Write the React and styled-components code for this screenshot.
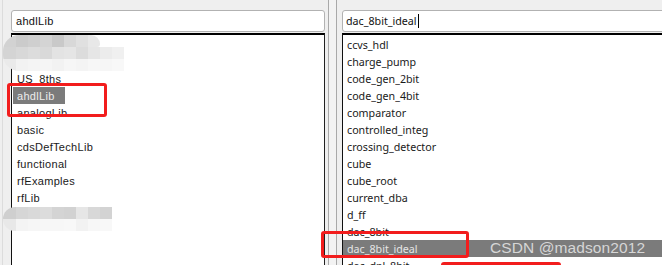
import React from 'react'
import styled, { createGlobalStyle } from 'styled-components'

const GlobalStyle = createGlobalStyle`
  html, body {
    margin: 0;
    padding: 0;
    background: #efefef;
    overflow: hidden;
  }
`

const leftItems = [
  { name: '' },
  { name: '' },
  { name: 'US_8ths' },
  { name: 'ahdlLib', selected: true },
  { name: 'analogLib' },
  { name: 'basic' },
  { name: 'cdsDefTechLib' },
  { name: 'functional' },
  { name: 'rfExamples' },
  { name: 'rfLib' },
]

const rightItems = [
  'ccvs_hdl',
  'charge_pump',
  'code_gen_2bit',
  'code_gen_4bit',
  'comparator',
  'controlled_integ',
  'crossing_detector',
  'cube',
  'cube_root',
  'current_dba',
  'd_ff',
  'dac_8bit',
  'dac_8bit_ideal',
  'dac_dpl_8bit',
]

// pixelated smudge hiding names in the reference
const mosaicTop = [
  { round: true, cells: ['#d2d2d2', '#cbcbcb', '#cfcfcf', '#d4d4d4', '#c9c9c9', '#d8d8d8', '#e0e0e0', '#e8e8e8'] },
  { cells: ['#d4d4d4', '#d8d8d8', '#dcdcdc', '#d9d9d9', '#e3e3e3', '#e5e5e5', '#dcdcdc', '#e6e6e6', '#ececec', '#f0f0f0'] },
  { cells: ['#eaeaea', '#f2f2f2', '#f4f4f4', '#f5f5f5', '#f2f2f2', '#f6f6f6', '#f4f4f4', '#f7f7f7', '#f6f6f6', '#f8f8f8'] },
]

const mosaicBottom = [
  { cells: ['#cfcfcf', '#d6d6d6', '#d9d9d9', '#dcdcdc', '#d4d4d4', '#d2d2d2', '#e6e6e6', '#d8d8d8', '#d3d3d3'] },
  { cells: ['#e8e8e8', '#f4f4f4', '#f6f6f6', '#f7f7f7', '#f7f7f7', '#f8f8f8', '#f2f2f2', '#f7f7f7', '#f8f8f8'] },
]

const Mosaic = ({ rows, top, left }) => (
  <Smudge style={{ top, left }}>
    {rows.map((row, i) => (
      <SmudgeRow key={i} $round={row.round}>
        {row.cells.map((c, j) => (
          <Cell key={j} $color={c} $cap={j === 0} />
        ))}
      </SmudgeRow>
    ))}
  </Smudge>
)

const App = () => {
  return (
    <>
      <GlobalStyle />
      <Window>
        <LeftPane>
          <SearchBox>ahdlLib</SearchBox>
          <ListBox>
            {leftItems.map((it, i) => (
              <Row key={i}>
                <Label $selected={it.selected}>{it.name}</Label>
              </Row>
            ))}
          </ListBox>
        </LeftPane>
        <Splitter>
          <Grip />
        </Splitter>
        <RightPane>
          <SearchBox $wide>
            dac_8bit_ideal
            <Caret />
          </SearchBox>
          <ListBox $open>
            {rightItems.map((name) => (
              <WideRow key={name} $selected={name === 'dac_8bit_ideal'}>
                {name}
              </WideRow>
            ))}
          </ListBox>
        </RightPane>

        <Mosaic rows={mosaicTop} top={35} left={3} />
        <Mosaic rows={mosaicBottom} top={207} left={3} />

        <Mark style={{ left: 7, top: 83, width: 100, height: 34 }} />
        <Mark style={{ left: 321, top: 231, width: 148, height: 27 }} />
        <Mark style={{ left: 441, top: 262, width: 120, height: 20 }} />

        <Watermark>CSDN @madson2012</Watermark>
      </Window>
    </>
  )
}

export default App

const Window = styled.div`
  position: relative;
  display: flex;
  width: 662px;
  height: 265px;
  overflow: hidden;
  background: #efefef;
`

const LeftPane = styled.div`
  display: flex;
  flex-direction: column;
  width: 314px;
  padding: 10px 0 0 8px;
  margin-left: 2px;
  border-left: 1px solid #dcdcdc;
  flex-shrink: 0;
`

const RightPane = styled.div`
  display: flex;
  flex-direction: column;
  flex: 1;
  min-width: 0;
  padding-top: 10px;
`

const Splitter = styled.div`
  width: 17px;
  flex-shrink: 0;
  display: flex;
  padding-left: 3px;
  box-sizing: border-box;
`

const Grip = styled.div`
  width: 7px;
  height: 100%;
  border-left: 1px solid #a9a9a9;
  border-right: 1px solid #a9a9a9;
  background: #f3f3f3;
`

const SearchBox = styled.div`
  position: relative;
  display: flex;
  align-items: center;
  flex-shrink: 0;
  box-sizing: border-box;
  height: 22px;
  width: ${(p) => (p.$wide ? 'calc(100% + 10px)' : '100%')};
  padding-left: ${(p) => (p.$wide ? '3px' : '4px')};
  margin-bottom: 1px;
  background: #fff;
  border: 1px solid #b2b2b2;
  border-radius: 3px;
  font-family: ${(p) => (p.$wide ? '"Noto Sans"' : '"Liberation Sans"')}, sans-serif;
  font-size: ${(p) => (p.$wide ? '10.7px' : '11px')};
  letter-spacing: ${(p) => (p.$wide ? '0' : '0.3px')};
  color: #111;
`

const Caret = styled.span`
  display: inline-block;
  width: 1px;
  height: 14px;
  margin-left: 1px;
  background: #000;
`

const ListBox = styled.div`
  flex: 1;
  min-height: 0;
  overflow: hidden;
  background: #fff;
  border-top: 2px solid #000;
  border-left: 1px solid #111;
  border-right: ${(p) => (p.$open ? 'none' : '1px solid #222')};
  padding-top: 1px;
  margin-right: ${(p) => (p.$open ? '-10px' : '0')};
`

const Row = styled.div`
  height: 17px;
  display: flex;
  align-items: center;
  padding-left: 1px;
`

const Label = styled.span`
  display: inline-flex;
  align-items: center;
  height: 17px;
  padding: 0 10px 0 4px;
  font-family: "Liberation Sans", sans-serif;
  font-size: 11px;
  letter-spacing: 0.3px;
  color: ${(p) => (p.$selected ? '#ececec' : '#1a1a1a')};
  background: ${(p) => (p.$selected ? '#7b7b7b' : 'transparent')};
`

const WideRow = styled.div`
  height: 17px;
  display: flex;
  align-items: center;
  padding-left: 4px;
  font-family: "Noto Sans", sans-serif;
  font-size: 10.7px;
  color: ${(p) => (p.$selected ? '#e6e6e6' : '#1a1a1a')};
  background: ${(p) => (p.$selected ? '#7b7b7b' : 'transparent')};
`

const Smudge = styled.div`
  position: absolute;
  display: flex;
  flex-direction: column;
  align-items: flex-start;
  border-radius: 16px 0 0 16px;
  overflow: hidden;
  filter: blur(0.5px);
`

const SmudgeRow = styled.div`
  display: flex;
  border-top-right-radius: ${(p) => (p.$round ? '12px' : '0')};
  border-bottom-right-radius: ${(p) => (p.$round ? '4px' : '0')};
  overflow: hidden;
`

const Cell = styled.div`
  width: ${(p) => (p.$cap ? '13px' : '12px')};
  height: 12px;
  background: ${(p) => p.$color};
`

const Mark = styled.div`
  position: absolute;
  box-sizing: border-box;
  border: 3px solid #f21d1d;
  border-radius: 3px;
  pointer-events: none;
`

const Watermark = styled.div`
  position: absolute;
  left: 490px;
  top: 238px;
  font-family: "Liberation Sans", sans-serif;
  font-size: 15.5px;
  line-height: 19px;
  color: #d6d6d6;
  letter-spacing: 0.1px;
  pointer-events: none;
`
